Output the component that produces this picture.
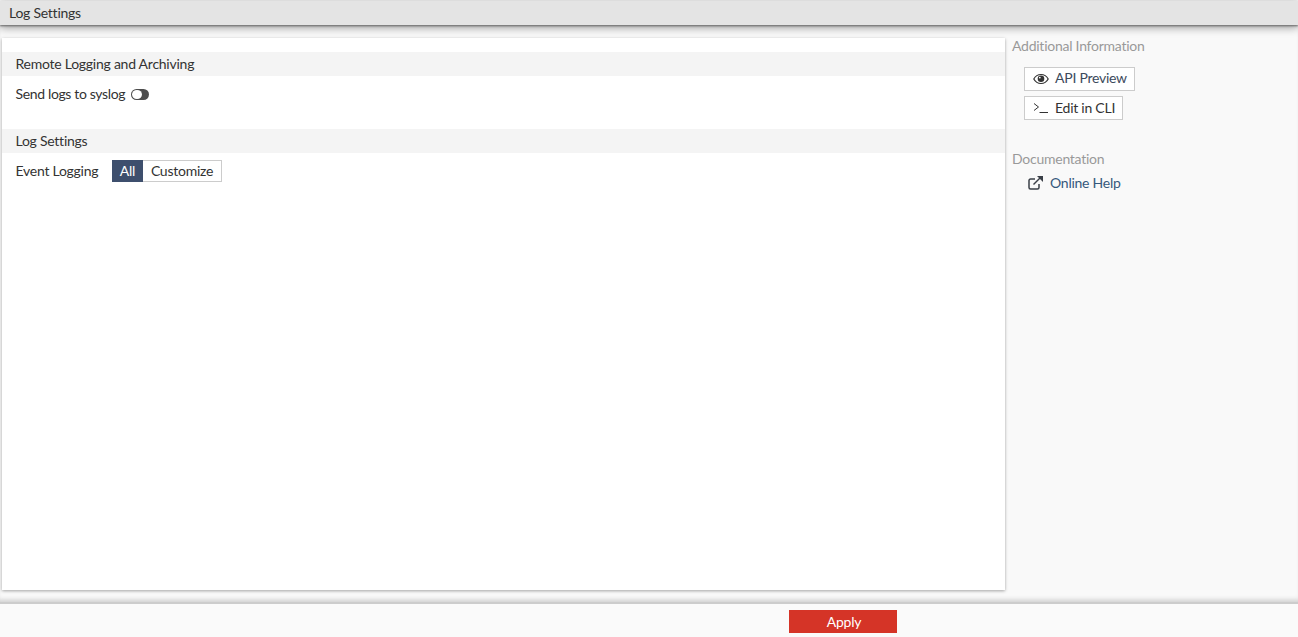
<script>
</script>

<div class="page">
  <header class="top">Log Settings</header>
  <div class="body">
    <main class="card">
      <div class="sec">Remote Logging and Archiving</div>
      <div class="row syslog">
        <span class="syslabel">Send logs to syslog</span>
        <span class="toggle"><span class="knob"></span></span>
      </div>
      <div class="sec second">Log Settings</div>
      <div class="row event">
        <span class="lab">Event Logging</span>
        <div class="seg">
          <span class="on">All</span>
          <span class="off">Customize</span>
        </div>
      </div>
    </main>
    <aside class="side">
      <div class="h">Additional Information</div>
      <div class="btns">
        <button class="b api">
          <svg width="16" height="12" viewBox="0 0 16 12"><path fill="none" stroke="#333" stroke-width="1.200" d="M.8 6C2.300 3.200 5 1.500 8 1.500s5.700 1.700 7.200 4.500c-1.500 2.800-4.200 4.500-7.200 4.500S2.300 8.800.8 6z"/><circle cx="8" cy="5.800" r="3.300" fill="#333"/><circle cx="6.800" cy="4.600" r=".9" fill="#fff"/></svg>
          <span class="t">API Preview</span>
        </button>
        <button class="b cli">
          <svg width="16" height="12" viewBox="0 0 16 12" fill="none" stroke="#333" stroke-width="1"><path d="M1 1.500l4.500 3.500L1 8.500"/><path d="M6.500 10.500H15"/></svg>
          <span class="t">Edit in CLI</span>
        </button>
      </div>
      <div class="h doc">Documentation</div>
      <div class="link">
        <svg width="15" height="14" viewBox="0 0 15 14" fill="none" stroke="#3a3f47" stroke-width="1.500"><path d="M11 8v3.500a1.500 1.500 0 0 1-1.500 1.500h-7A1.500 1.500 0 0 1 1 11.500v-7A1.500 1.500 0 0 1 2.500 3H7"/><path d="M5.500 8.500L13 1"/><path fill="#3a3f47" stroke="none" d="M9 0h6v6z"/></svg>
        <span>Online Help</span>
      </div>
    </aside>
  </div>
  <footer class="foot"><button class="apply">Apply</button></footer>
</div>

<style>
  :global(body) { margin: 0; }
  .page {
    width: 1298px;
    height: 637px;
    display: flex;
    flex-direction: column;
    background: #f9f9f9;
    font-family: Lato, "Liberation Sans", sans-serif;
    font-size: 14px;
    letter-spacing: -0.25px;
    color: #333;
    overflow: hidden;
  }
  .top {
    height: 24px;
    box-sizing: border-box;
    margin-top: 1px;
    padding-left: 9px;
    line-height: 24px;
    background: #e4e4e4;
    box-shadow: 0 1px 2px #666, 0 3px 8px rgba(0,0,0,.35);
    position: relative;
    flex: none;
  }
  .body {
    flex: 1;
    display: flex;
    min-height: 0;
    padding: 13px 0 12px 2px;
    box-shadow: inset 0 -5px 5px -3px #ccc;
  }
  .card {
    width: 1003px;
    flex: none;
    background: #fff;
    box-shadow: 0 1px 3px rgba(0,0,0,.35);
    padding-top: 14px;
    box-sizing: border-box;
  }
  .sec {
    height: 24px;
    line-height: 24px;
    padding-left: 13.5px;
    background: #f4f4f4;
  }
  .second { margin-top: 17px; }
  .row { display: flex; align-items: center; padding-left: 13.5px; }
  .syslog { height: 36px; gap: 6px; }
  .syslabel { letter-spacing: -0.35px; line-height: 17px; margin-top: -1px; }
  .toggle {
    width: 18px;
    height: 11px;
    border-radius: 6px;
    background: #4d4d4d;
    display: inline-flex;
    align-items: center;
    padding-left: 1px;
    box-sizing: border-box;
  }
  .knob { width: 9.5px; height: 9px; border-radius: 50%; background: #fff; }
  .event { height: 36px; }
  .lab { width: 96.500px; line-height: 17px; margin-top: -2px; }
  .seg { display: flex; height: 22px; line-height: 20px; }
  .on {
    background: #3e4f6d;
    color: #fff;
    width: 31px;
    text-align: center;
    line-height: 21px;
  }
  .off {
    border: 1px solid #ccc;
    border-left: 0;
    width: 79px;
    box-sizing: border-box;
    text-align: center;
  }
  .side { flex: 1; padding: 0 0 0 7px; margin-top: -1px; }
  .h { color: #999; line-height: 17px; }
  .btns {
    display: flex;
    flex-direction: column;
    align-items: flex-start;
    gap: 5px;
    margin: 13px 0 0 12px;
  }
  .b {
    display: flex;
    align-items: center;
    height: 24px;
    padding: 0 7px 0 8px;
    gap: 6px;
    border: 1px solid #ccc;
    background: #fff;
    font: inherit;
    letter-spacing: inherit;
    line-height: 17px;
    color: #3c4a5c;
  }
  .b svg { flex: none; }
  .t { margin-top: -1px; }
  .api .t { margin-top: -3px; }
  .cli { color: #333; }
  .doc { margin-top: 30px; }
  .link {
    display: flex;
    align-items: center;
    gap: 7px;
    margin: 7px 0 0 16px;
    color: #35587c;
    height: 17px;
  }
  .foot {
    height: 35px;
    flex: none;
    background: #fafafa;
    border-top: 2px solid #ccc;
    box-sizing: border-box;
    display: flex;
    padding: 6px 0 0 789px;
  }
  .apply {
    width: 108px;
    height: 23px;
    border: 0;
    background: #d53427;
    color: #fff;
    font: inherit;
    letter-spacing: inherit;
    padding: 0 0 0 2px;
  }
</style>
